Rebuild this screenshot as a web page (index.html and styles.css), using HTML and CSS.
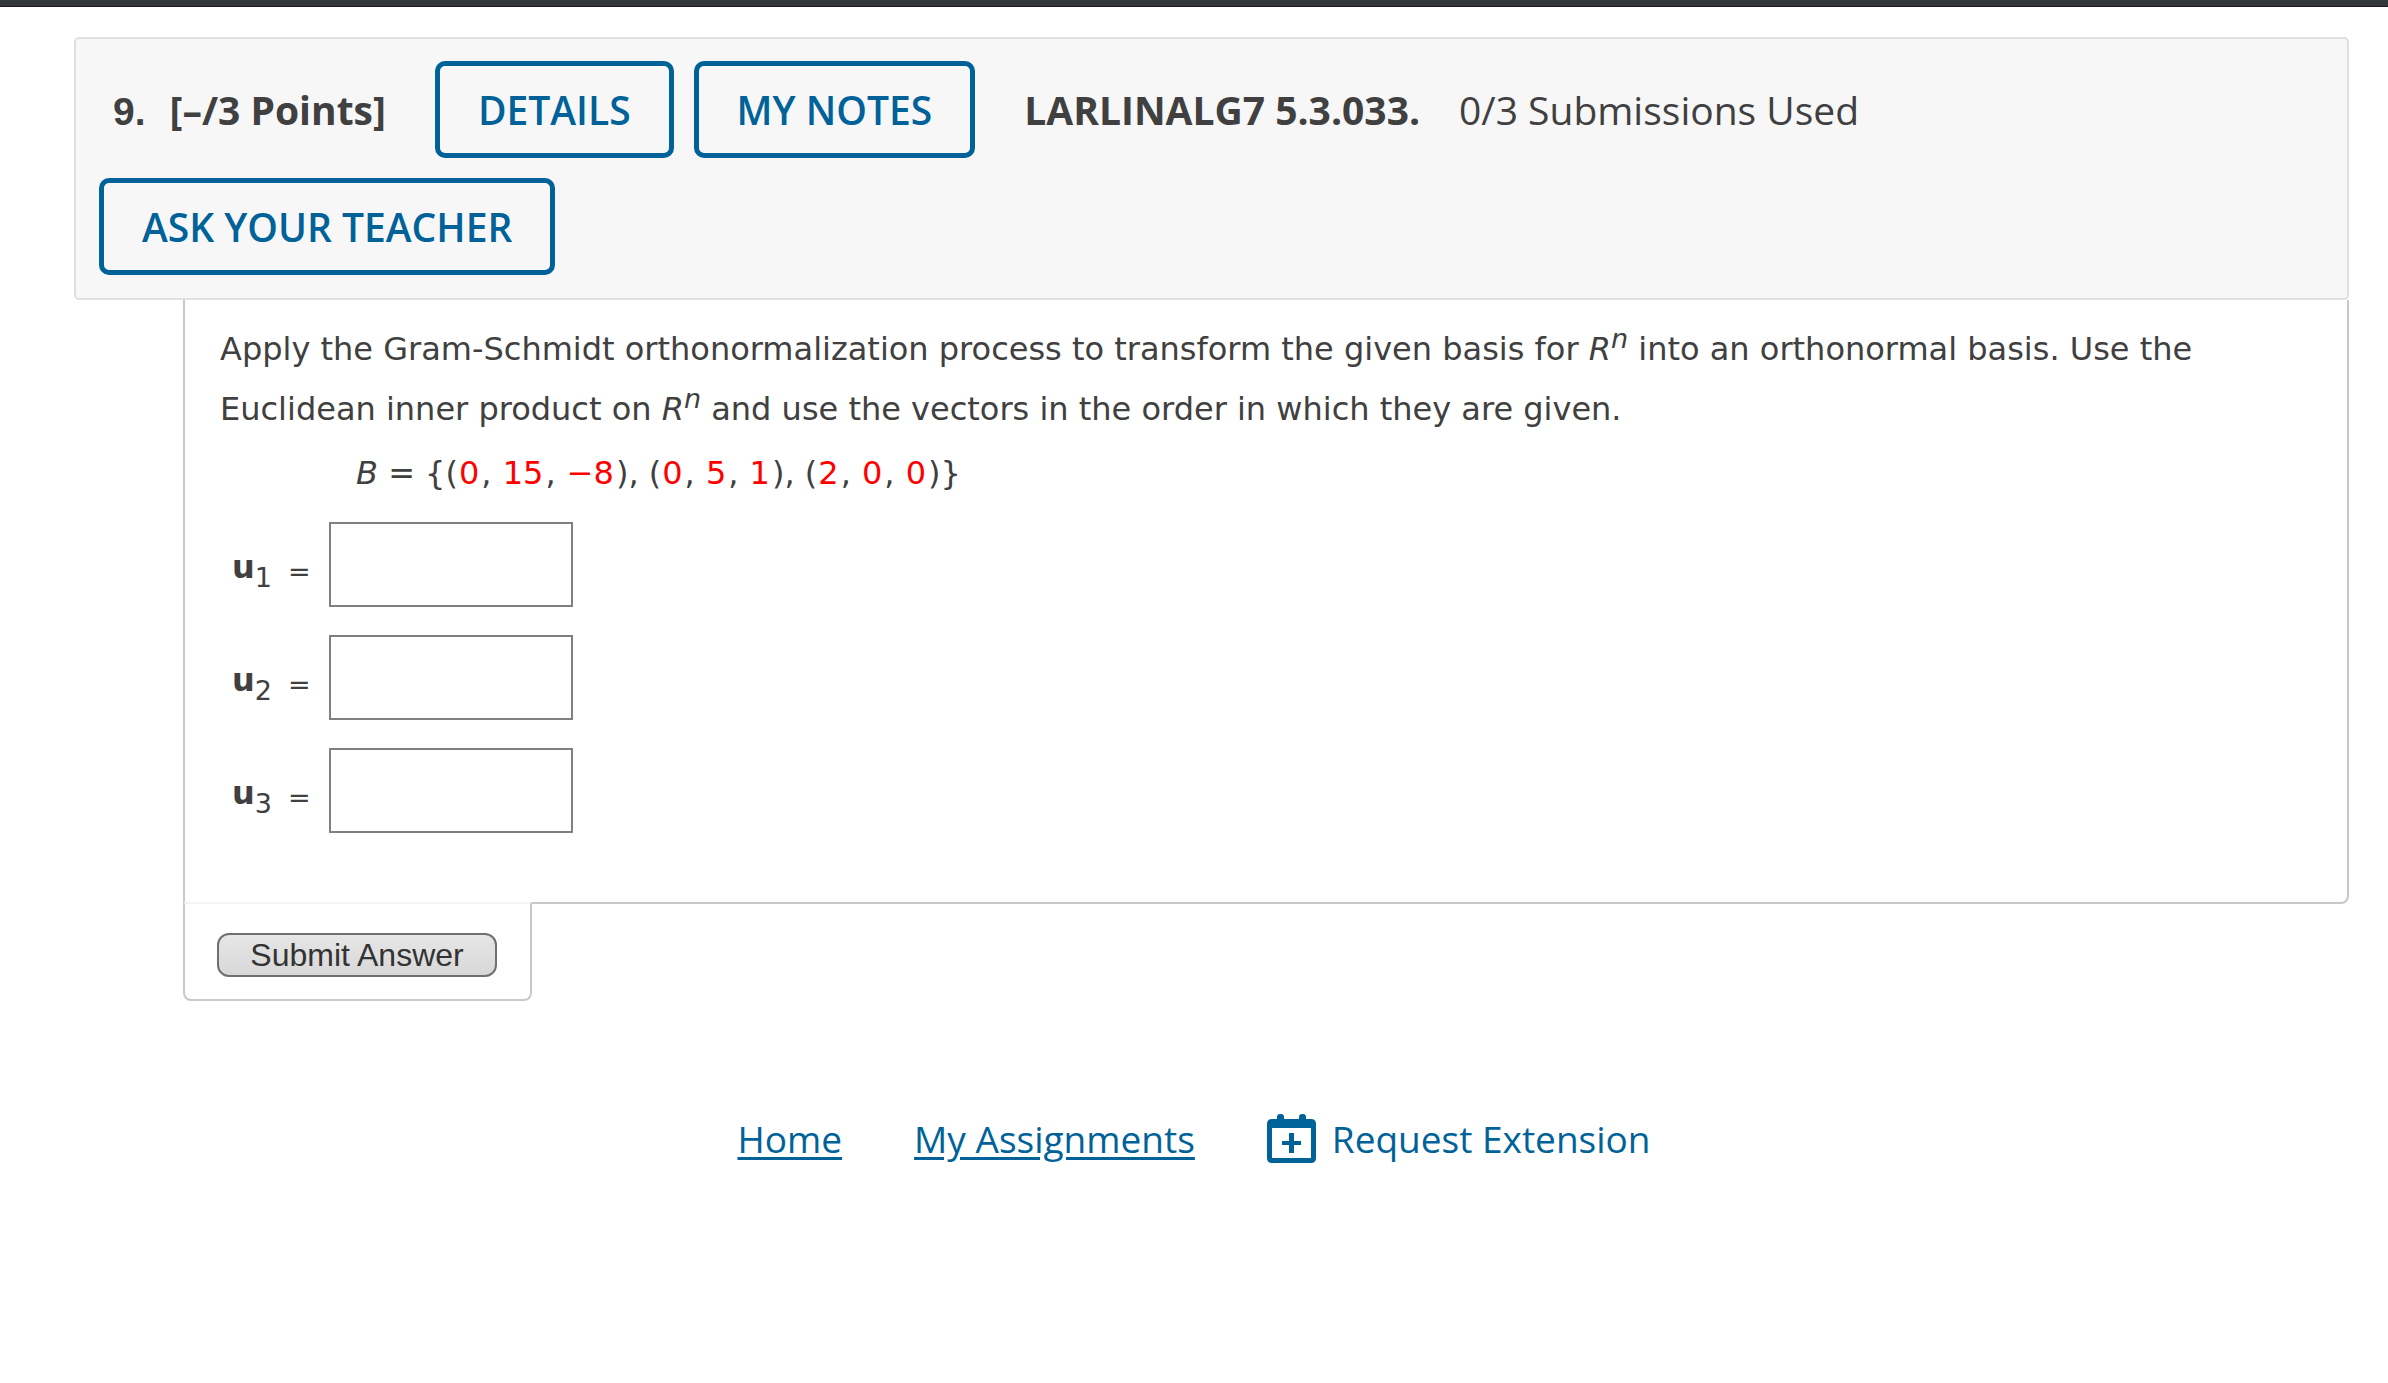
FILE: index.html
```html
<!DOCTYPE html>
<html lang="en">
<head>
    <meta charset="UTF-8">
    <meta name="viewport" content="width=device-width, initial-scale=1.0">
    <title>Question 9</title>
    <link rel="stylesheet" href="styles.css">
</head>
<body>
    <div class="topbar"></div>
    <main>
        <div class="question-header">
            <h2 class="points"><span class="number">9.</span>[–/3 Points]</h2>
            <button type="button" class="header-btn">DETAILS</button>
            <button type="button" class="header-btn">MY NOTES</button>
            <div class="info"><strong>LARLINALG7 5.3.033.</strong><span>0/3 Submissions Used</span></div>
            <button type="button" class="header-btn">ASK YOUR TEACHER</button>
        </div>
        <form class="question" onsubmit="return false">
            <div class="question-body">
                <p>Apply the Gram-Schmidt orthonormalization process to transform the given basis for <i>R<sup>n</sup></i> into an orthonormal basis. Use the Euclidean inner product on <i>R<sup>n</sup></i> and use the vectors in the order in which they are given.</p>
                <p class="basis"><i>B</i> = {(<b>0</b>, <b>15</b>, <b>−8</b>), (<b>0</b>, <b>5</b>, <b>1</b>), (<b>2</b>, <b>0</b>, <b>0</b>)}</p>
                <div class="answer">
                    <label for="u1"><strong>u</strong><sub>1</sub></label>
                    <span class="equals">=</span>
                    <input type="text" id="u1">
                </div>
                <div class="answer">
                    <label for="u2"><strong>u</strong><sub>2</sub></label>
                    <span class="equals">=</span>
                    <input type="text" id="u2">
                </div>
                <div class="answer">
                    <label for="u3"><strong>u</strong><sub>3</sub></label>
                    <span class="equals">=</span>
                    <input type="text" id="u3">
                </div>
            </div>
            <div class="submit-box">
                <button type="submit" class="submit">Submit Answer</button>
            </div>
        </form>
    </main>
    <footer>
        <a href="#">Home</a>
        <a href="#">My Assignments</a>
        <a href="#" class="extension">
            <svg width="49" height="49" viewBox="0 0 49 49" aria-hidden="true">
                <path fill="#006298" fill-rule="evenodd" d="M10 5V3Q10 0 13 0H14Q17 0 17 3V5H32V3Q32 0 35 0H36Q39 0 39 3V5H44Q49 5 49 10V44Q49 49 44 49H5Q0 49 0 44V10Q0 5 5 5ZM5 14V44H44V14Z"/>
                <path fill="#006298" d="M22 19H27V27H34V31H27V39H22V31H15V27H22Z"/>
            </svg>
            Request Extension
        </a>
    </footer>
</body>
</html>
```
FILE: styles.css
```css
* {
    box-sizing: border-box;
}

body {
    margin: 0;
    background-color: #fff;
    color: #404040;
    font-family: "Open Sans", sans-serif;
    font-size: 39px;
}

.topbar {
    height: 7px;
    background-color: #33373a;
    border-bottom: 1px solid #1c181b;
}

main {
    margin: 30px 39px 0 74px;
}

.question-header {
    display: flex;
    flex-wrap: wrap;
    align-items: center;
    gap: 20px;
    padding: 22px 23px 23px;
    background-color: #f7f7f7;
    border: 2px solid #dfdfdf;
    border-radius: 5px;
}

.points {
    margin: 0 29px 0 14px;
    font-size: 39px;
    font-weight: bold;
}

.number {
    margin-right: 24px;
    font-family: "Liberation Sans", Arial, sans-serif;
}

.header-btn {
    height: 97px;
    padding: 0 38px;
    border: 5px solid #006298;
    border-radius: 10px;
    background-color: transparent;
    color: #006298;
    font-family: inherit;
    font-size: 39px;
    font-weight: 600;
    cursor: pointer;
}

.header-btn:hover {
    background-color: #e6f0f5;
}

.info {
    display: flex;
    gap: 39px;
    margin-left: 29px;
}

.question {
    margin-left: 109px;
}

.question-body {
    padding: 19px 35px 69px;
    border: 2px solid #c8c8c8;
    border-top: none;
    border-radius: 0 0 8px 0;
    font-family: Verdana, "DejaVu Sans", sans-serif;
    font-size: 32px;
    line-height: 60px;
}

.question-body p {
    max-width: 2000px;
    margin: 0;
}

.question-body sup,
.question-body sub {
    font-size: 27px;
    line-height: 0;
}

.question-body sub {
    vertical-align: -9px;
}

.question-body .basis {
    margin: 4px 0 19px 136px;
}

.basis b {
    margin: 0 2px 0 1px;
    color: #f00;
    font-weight: normal;
}

.answer {
    display: flex;
    align-items: center;
    margin: 0 0 28px 12px;
}

.answer:last-child {
    margin-bottom: 0;
}

.answer label {
    width: 56px;
    padding-top: 4px;
}

.equals {
    width: 41px;
    padding-top: 14px;
    font-size: 27px;
}

.answer input {
    width: 244px;
    height: 85px;
    padding: 0 12px;
    border: 2px solid #808080;
    font-size: 32px;
}

.submit-box {
    width: 349px;
    margin-top: -2px;
    padding: 29px 32px 22px;
    border: 2px solid #c8c8c8;
    border-top-color: #f3f3f3;
    border-radius: 0 0 8px 8px;
    background-color: #fff;
}

.submit {
    display: block;
    width: 280px;
    height: 44px;
    padding: 0;
    border: 2px solid #707070;
    border-radius: 12px;
    background: linear-gradient(#e6e6e6, #d8d8d8);
    color: #333;
    font-family: "Liberation Sans", Arial, sans-serif;
    font-size: 32px;
    line-height: 40px;
    cursor: pointer;
}

footer {
    display: flex;
    justify-content: center;
    align-items: center;
    gap: 72px;
    margin-top: 112px;
    font-size: 37px;
}

footer a {
    color: #006298;
    text-underline-offset: 4px;
}

.extension {
    display: flex;
    align-items: center;
    gap: 16px;
    text-decoration: none;
}
```
